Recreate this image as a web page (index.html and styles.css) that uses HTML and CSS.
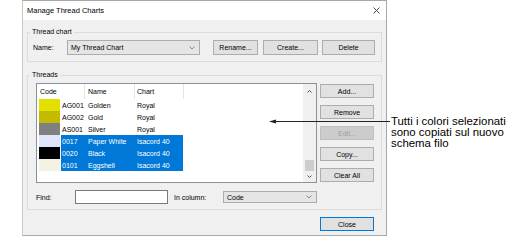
FILE: index.html
```html
<!DOCTYPE html>
<html lang="en">
<head>
    <meta charset="UTF-8">
    <title>Manage Thread Charts</title>
    <link rel="stylesheet" href="styles.css">
</head>
<body>

    <div class="page">

        <div class="dialog">

            <div class="titlebar">
                <span>Manage Thread Charts</span>
                <svg class="close-x" width="7" height="7" viewBox="0 0 7 7">
                    <path d="M0.5 0.5 L6.5 6.5 M6.5 0.5 L0.5 6.5" stroke="#333" stroke-width="0.9" fill="none"/>
                </svg>
            </div>

            <div class="body">

                <fieldset class="group">
                    <legend>Thread chart</legend>
                    <div class="chart-row">
                        <span class="name-label">Name:</span>
                        <div class="combo combo-name">
                            <span>My Thread Chart</span>
                            <svg width="6" height="4" viewBox="0 0 6 4"><path d="M0.5 0.5 L3 3 L5.5 0.5" stroke="#888" fill="none"/></svg>
                        </div>
                        <button class="btn btn-rename">Rename...</button>
                        <button class="btn btn-create">Create...</button>
                        <button class="btn btn-delete">Delete</button>
                    </div>
                </fieldset>

                <fieldset class="group group-threads">
                    <legend>Threads</legend>

                    <div class="threads-main">
                        <div class="listbox">
                            <div class="list">
                                <div class="list-head">
                                    <span class="hcell hcell-code">Code</span>
                                    <span class="hcell hcell-name">Name</span>
                                    <span class="hcell hcell-chart">Chart</span>
                                </div>
                                <!-- one row per thread, swatch sits outside the selection -->
                                <div class="row">
                                    <span class="swatch golden"></span>
                                    <span class="cells"><span class="c-code">AG001</span><span class="c-name">Golden</span><span>Royal</span></span>
                                </div>
                                <div class="row">
                                    <span class="swatch gold"></span>
                                    <span class="cells"><span class="c-code">AG002</span><span class="c-name">Gold</span><span>Royal</span></span>
                                </div>
                                <div class="row">
                                    <span class="swatch silver"></span>
                                    <span class="cells"><span class="c-code">AS001</span><span class="c-name">Silver</span><span>Royal</span></span>
                                </div>
                                <div class="row selected">
                                    <span class="swatch paper-white"></span>
                                    <span class="cells"><span class="c-code">0017</span><span class="c-name">Paper White</span><span>Isacord 40</span></span>
                                </div>
                                <div class="row selected">
                                    <span class="swatch black"></span>
                                    <span class="cells"><span class="c-code">0020</span><span class="c-name">Black</span><span>Isacord 40</span></span>
                                </div>
                                <div class="row selected">
                                    <span class="swatch eggshell"></span>
                                    <span class="cells"><span class="c-code">0101</span><span class="c-name">Eggshell</span><span>Isacord 40</span></span>
                                </div>
                            </div>
                            <div class="scrollbar">
                                <div class="sb-arrow sb-up">
                                    <svg width="5" height="3" viewBox="0 0 5 3"><path d="M0.5 2.5 L2.5 0.5 L4.5 2.5" stroke="#555" fill="none"/></svg>
                                </div>
                                <div class="sb-track"><div class="sb-thumb"></div></div>
                                <div class="sb-arrow sb-down">
                                    <svg width="5" height="3" viewBox="0 0 5 3"><path d="M0.5 0.5 L2.5 2.5 L4.5 0.5" stroke="#555" fill="none"/></svg>
                                </div>
                            </div>
                        </div>

                        <div class="side-btns">
                            <button class="btn">Add...</button>
                            <button class="btn">Remove</button>
                            <button class="btn" disabled>Edit...</button>
                            <button class="btn">Copy...</button>
                            <button class="btn">Clear All</button>
                        </div>
                    </div>

                    <div class="find-row">
                        <span class="find-label">Find:</span>
                        <input class="find-input" type="text">
                        <span class="column-label">In column:</span>
                        <div class="combo combo-column">
                            <span>Code</span>
                            <svg width="6" height="4" viewBox="0 0 6 4"><path d="M0.5 0.5 L3 3 L5.5 0.5" stroke="#888" fill="none"/></svg>
                        </div>
                    </div>
                </fieldset>

                <div class="footer">
                    <button class="btn btn-close">Close</button>
                </div>

            </div>
        </div>

        <div class="callout">
            <svg class="arrow" width="121" height="7" viewBox="0 0 121 7">
                <path d="M5 3.5 L121 3.5" stroke="#222" stroke-width="1"/>
                <path d="M0 3.5 L7 1.5 L7 5.5 Z" fill="#222"/>
            </svg>
            Tutti i colori selezionati<br>
            sono copiati sul nuovo<br>
            schema filo
        </div>

    </div>

</body>
</html>
```

FILE: styles.css
```css
body {
    margin: 0;
    background-color: #fff;
    font-family: "Liberation Sans", Arial, sans-serif;
}

.page {
    display: flex;
    align-items: flex-start;
}

/* the dialog window */
.dialog {
    margin-left: 22px;
    width: 363px;
    border: 1px solid #a8a8a8;
    border-left-color: #c8c8c8;
    font-size: 7px;
    color: #000;
}

.titlebar {
    display: flex;
    align-items: center;
    justify-content: space-between;
    height: 19px;
    padding: 0 6px 0 4px;
    background-color: #fff;
    font-size: 7.5px;
}

.body {
    background-color: #f0f0f0;
    padding: 7px 4px 4px;
}

.group {
    margin: 0;
    padding: 0;
    min-width: 0;
    border: 1px solid #dcdcdc;
}

.group legend {
    margin-left: 2px;
    padding: 0 2px;
    line-height: 10px;
}

.group-threads {
    margin-top: 8px;
}

.btn {
    box-sizing: border-box;
    height: 15px;
    padding: 0;
    border: 1px solid #adadad;
    background-color: #e1e1e1;
    font-family: inherit;
    font-size: 7px;
    color: #000;
}

.btn:disabled {
    background-color: #cccccc;
    border-color: #bfbfbf;
    color: #a0a0a0;
}

.combo {
    box-sizing: border-box;
    display: flex;
    align-items: center;
    justify-content: space-between;
    padding: 0 4px 0 3px;
    border: 1px solid #acacac;
    background-color: #e5e5e5;
}

/* thread chart row */
.chart-row {
    display: flex;
    align-items: center;
    height: 15px;
    padding: 3px 5px 6px 5px;
}

.name-label {
    width: 34px;
}

.combo-name {
    width: 133px;
    height: 15px;
}

.btn-rename {
    width: 45px;
    margin-left: 13px;
}

.btn-create {
    width: 55px;
    margin-left: 5px;
}

.btn-delete {
    width: 53px;
    margin-left: 4px;
}

/* threads list */
.threads-main {
    display: flex;
    align-items: flex-start;
    padding: 3px 7px 0 8px;
}

.listbox {
    box-sizing: border-box;
    display: flex;
    width: 281px;
    height: 100px;
    border: 1px solid #8c9099;
    background-color: #fff;
}

.list {
    flex: 1;
}

.list-head {
    display: flex;
    height: 15px;
}

.hcell {
    box-sizing: border-box;
    display: flex;
    align-items: center;
    border-right: 1px solid #e5e5e5;
}

.hcell-code {
    width: 48px;
    padding-left: 3px;
}

.hcell-name {
    width: 50px;
    padding-left: 3px;
}

.hcell-chart {
    width: 49px;
    padding-left: 2px;
}

.row {
    display: flex;
    height: 12px;
}

.swatch {
    width: 21px;
    margin-left: 2px;
}

.golden { background-color: #e2e000; }
.gold { background-color: #c4bb00; }
.silver { background-color: #808080; }
.paper-white { background-color: #dfe6fb; }
.black { background-color: #000; }
.eggshell { background-color: #f4f2e3; }

.cells {
    display: flex;
    align-items: center;
    width: 122px;
    margin-left: 1px;
}

.row.selected .cells {
    background-color: #0078d7;
    color: #fff;
}

.c-code {
    box-sizing: border-box;
    width: 27px;
    padding-left: 1px;
}

.c-name {
    width: 49px;
}

.scrollbar {
    display: flex;
    flex-direction: column;
    width: 13px;
    background-color: #f0f0f0;
}

.sb-arrow {
    display: flex;
    align-items: center;
    justify-content: center;
}

.sb-up {
    height: 14px;
}

.sb-down {
    height: 11px;
}

.sb-track {
    flex: 1;
    display: flex;
    flex-direction: column;
    justify-content: flex-end;
}

.sb-thumb {
    height: 11px;
    margin: 0 2px;
    background-color: #cdcdcd;
}

.side-btns {
    display: flex;
    flex-direction: column;
    gap: 7px;
    margin: 1px 0 0 3px;
}

.side-btns .btn {
    width: 54px;
    height: 14px;
}

/* find row */
.find-row {
    display: flex;
    align-items: center;
    padding: 7px 7px 5px 8px;
}

.find-label {
    width: 39px;
}

.find-input {
    box-sizing: border-box;
    width: 93px;
    height: 14px;
    margin: 0;
    padding: 0;
    border: 1px solid #7a7a7a;
    background-color: #fff;
}

.column-label {
    width: 49px;
    margin-left: 6px;
}

.combo-column {
    width: 94px;
    height: 12px;
}

.footer {
    display: flex;
    justify-content: flex-end;
    padding: 7px 8px 0 0;
}

.btn-close {
    width: 54px;
    height: 14px;
    border-color: #0078d7;
}

/* annotation beside the dialog */
.callout {
    position: relative;
    margin: 116px 0 0 4px;
    font-size: 11.4px;
    line-height: 11px;
    color: #000;
}

.arrow {
    position: absolute;
    right: 100%;
    top: 2px;
    margin-right: 1px;
}
```
